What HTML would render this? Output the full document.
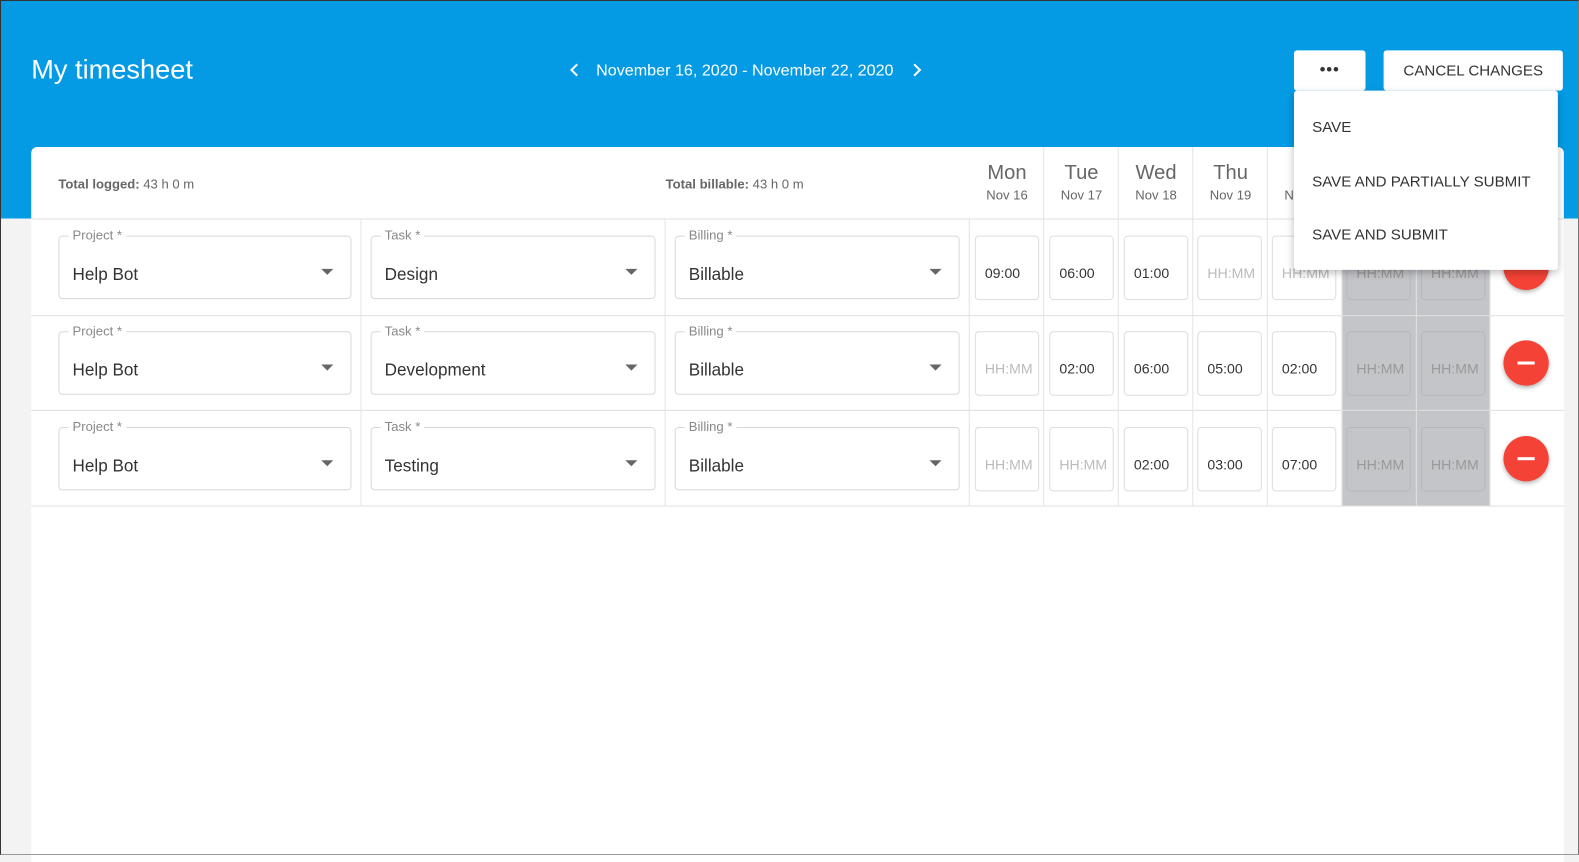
<!DOCTYPE html>
<html><head><style>
*{box-sizing:border-box;margin:0;padding:0}
html,body{width:1579px;height:855px;overflow:hidden;background:#f3f3f3;font-family:"Liberation Sans",sans-serif}
#w{position:absolute;left:0;top:0;width:1568px;height:849px;transform:scale(1.007);transform-origin:0 0}
.frame{position:absolute;left:0;top:0;width:1579px;height:855px;border-right:1px solid #777;border-bottom:1px solid #999;border-top:1px solid #333;border-left:1px solid #333;pointer-events:none}
.hdr{position:absolute;left:0;top:0;width:1568px;height:217px;background:#049be4}
.title{position:absolute;left:31px;top:54px;color:#fff;font-size:27px}
.range{position:absolute;left:592px;top:62px;color:#fff;font-size:16px}
.arr{position:absolute;top:65px;width:9px;height:9px;border-left:2.5px solid #fff;border-bottom:2.5px solid #fff}
.btn{position:absolute;top:50px;height:40px;background:#fff;border-radius:3px;color:#333;font-size:15px;display:flex;align-items:center;justify-content:center}
.card{position:absolute;left:31px;top:146px;width:1522px;height:710px;background:#fff;border-radius:6px 6px 0 0}
.cell{position:absolute;border-right:1px solid #e3e3e3}
.hline{position:absolute;left:0;width:1522px;height:1px;background:#e0e0e0}
.sel{position:absolute;border:1px solid #d8d8d8;border-radius:4px;height:63px}
.sel .lab{position:absolute;left:9px;top:-9px;background:#fff;padding:0 4px;font-size:13px;color:#888}
.sel .val{position:absolute;left:13px;top:28px;font-size:17px;color:#333}
.sel .tri{position:absolute;right:17px;top:32px;border-left:6px solid transparent;border-right:6px solid transparent;border-top:6px solid #666}
.day{position:absolute;top:0;width:74px;text-align:center;color:#666}
.day b{display:block;font-weight:normal;font-size:20px;margin-top:15px}
.day span{font-size:13px;display:block;margin-top:2px}
.tb{position:absolute;width:64px;height:64px;border:1px solid #ddd;border-radius:4px;font-size:14px;color:#333;padding-left:9px;line-height:72px;background:#fff;overflow:hidden;white-space:nowrap}
.tb.ph{color:#bbb}
.tb.g{background:#c4c5c9;border-color:#b6b7bb;color:#999}
.gcol{position:absolute;background:#c4c5c9;width:74px;height:285px;top:72px}
.del{position:absolute;left:1462px;width:45px;height:45px;border-radius:50%;background:#f44336;box-shadow:0 2px 4px rgba(0,0,0,.3)}
.del:after{content:"";position:absolute;left:14px;top:21px;width:17px;height:3px;background:#fff}
.menu{position:absolute;left:1285px;top:90px;width:262px;height:178px;background:#fff;border-radius:3px;box-shadow:0 3px 8px rgba(0,0,0,.25);font-size:15px;color:#333}
.menu div{position:absolute;left:18px}
</style></head><body>
<div id="w">
<div class="hdr"></div>
<div class="title">My timesheet</div>
<div class="arr" style="left:568px;transform:rotate(45deg)"></div>
<div class="range">November 16, 2020 - November 22, 2020</div>
<div class="arr" style="left:904px;transform:rotate(-135deg)"></div>
<div class="btn" style="left:1285px;width:71px;font-weight:bold;font-size:16px;letter-spacing:1px">•••</div>
<div class="btn" style="left:1374px;width:178px">CANCEL CHANGES</div>

<div class="card">
 <div style="position:absolute;left:27px;top:29px;font-size:13px;color:#666"><b>Total logged:</b> 43 h 0 m</div>
 <div style="position:absolute;left:630px;top:29px;font-size:13px;color:#666"><b>Total billable:</b> 43 h 0 m</div>
 <div class="gcol" style="left:1302px"></div><div class="gcol" style="left:1375px"></div>
 <div class="hline" style="top:71px"></div>
 <div class="hline" style="top:167px"></div>
 <div class="hline" style="top:261px"></div>
 <div class="hline" style="top:356px"></div>
 <div class="cell" style="left:0;top:72px;width:328px;height:285px"></div>
 <div class="cell" style="left:328px;top:72px;width:302px;height:285px"></div>
 <div class="cell" style="left:630px;top:72px;width:302px;height:285px"></div>
 <div class="cell" style="left:932px;top:0;width:74px;height:357px"></div>
 <div class="cell" style="left:1006px;top:0;width:74px;height:357px"></div>
 <div class="cell" style="left:1080px;top:0;width:74px;height:357px"></div>
 <div class="cell" style="left:1154px;top:0;width:74px;height:357px"></div>
 <div class="cell" style="left:1228px;top:0;width:74px;height:357px"></div>
 <div class="cell" style="left:1302px;top:0;width:74px;height:357px"></div>
 <div class="cell" style="left:1375px;top:0;width:74px;height:357px"></div>
 <div class="day" style="left:932px"><b>Mon</b><span>Nov 16</span></div>
 <div class="day" style="left:1006px"><b>Tue</b><span>Nov 17</span></div>
 <div class="day" style="left:1080px"><b>Wed</b><span>Nov 18</span></div>
 <div class="day" style="left:1154px"><b>Thu</b><span>Nov 19</span></div>
 <div class="day" style="left:1228px"><b>Fri</b><span>Nov 20</span></div>

 <div class="sel" style="left:27px;top:88px;width:291px"><span class="lab">Project *</span><span class="val">Help Bot</span><i class="tri"></i></div>
 <div class="sel" style="left:337px;top:88px;width:283px"><span class="lab">Task *</span><span class="val">Design</span><i class="tri"></i></div>
 <div class="sel" style="left:639px;top:88px;width:283px"><span class="lab">Billing *</span><span class="val">Billable</span><i class="tri"></i></div>
 <div class="tb" style="left:937px;top:88px">09:00</div>
 <div class="tb" style="left:1011px;top:88px">06:00</div>
 <div class="tb" style="left:1085px;top:88px">01:00</div>
 <div class="tb ph" style="left:1158px;top:88px">HH:MM</div>
 <div class="tb ph" style="left:1232px;top:88px">HH:MM</div>
 <div class="tb g" style="left:1306px;top:88px">HH:MM</div>
 <div class="tb g" style="left:1380px;top:88px">HH:MM</div>
 <div class="del" style="top:97px"></div>

 <div class="sel" style="left:27px;top:183px;width:291px"><span class="lab">Project *</span><span class="val">Help Bot</span><i class="tri"></i></div>
 <div class="sel" style="left:337px;top:183px;width:283px"><span class="lab">Task *</span><span class="val">Development</span><i class="tri"></i></div>
 <div class="sel" style="left:639px;top:183px;width:283px"><span class="lab">Billing *</span><span class="val">Billable</span><i class="tri"></i></div>
 <div class="tb ph" style="left:937px;top:183px">HH:MM</div>
 <div class="tb" style="left:1011px;top:183px">02:00</div>
 <div class="tb" style="left:1085px;top:183px">06:00</div>
 <div class="tb" style="left:1158px;top:183px">05:00</div>
 <div class="tb" style="left:1232px;top:183px">02:00</div>
 <div class="tb g" style="left:1306px;top:183px">HH:MM</div>
 <div class="tb g" style="left:1380px;top:183px">HH:MM</div>
 <div class="del" style="top:192px"></div>

 <div class="sel" style="left:27px;top:278px;width:291px"><span class="lab">Project *</span><span class="val">Help Bot</span><i class="tri"></i></div>
 <div class="sel" style="left:337px;top:278px;width:283px"><span class="lab">Task *</span><span class="val">Testing</span><i class="tri"></i></div>
 <div class="sel" style="left:639px;top:278px;width:283px"><span class="lab">Billing *</span><span class="val">Billable</span><i class="tri"></i></div>
 <div class="tb ph" style="left:937px;top:278px">HH:MM</div>
 <div class="tb ph" style="left:1011px;top:278px">HH:MM</div>
 <div class="tb" style="left:1085px;top:278px">02:00</div>
 <div class="tb" style="left:1158px;top:278px">03:00</div>
 <div class="tb" style="left:1232px;top:278px">07:00</div>
 <div class="tb g" style="left:1306px;top:278px">HH:MM</div>
 <div class="tb g" style="left:1380px;top:278px">HH:MM</div>
 <div class="del" style="top:287px"></div>
</div>

<div class="menu">
 <div style="top:28px">SAVE</div>
 <div style="top:82px">SAVE AND PARTIALLY SUBMIT</div>
 <div style="top:135px">SAVE AND SUBMIT</div>
</div>
</div>
<div class="frame"></div>
</body></html>
